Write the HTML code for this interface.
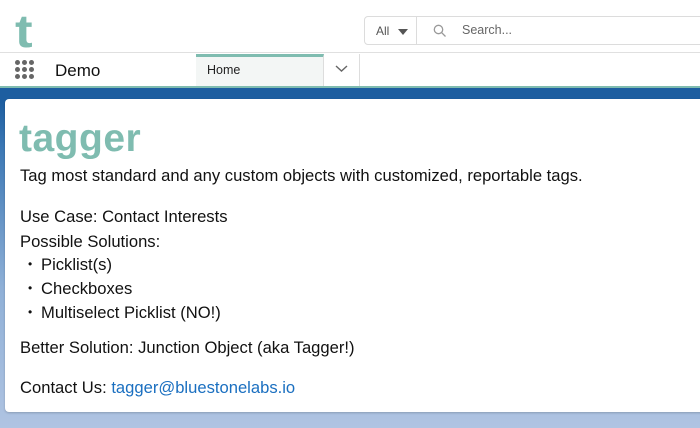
<!DOCTYPE html>
<html><head><style>
*{margin:0;padding:0;box-sizing:border-box}
body{width:700px;height:428px;overflow:hidden;font-family:"Liberation Sans",sans-serif;background:#fff;position:relative}
.hdr{position:absolute;left:0;top:0;width:700px;height:53px;background:#fff;border-bottom:1px solid #e0e0e0}
.logo{position:absolute;left:15px;top:4px;font-size:46px;font-weight:900;color:#7fbcb0;transform:scaleX(1.15);transform-origin:left}
.search{position:absolute;left:364px;top:16px;width:340px;height:29px;border:1px solid #dcdcdc;border-radius:4px;background:#fff}
.all{position:absolute;left:0;top:0;width:52px;height:27px;border-right:1px solid #dcdcdc;font-size:12px;color:#555;padding:7px 0 0 11px}
.all:after{content:"";position:absolute;left:33px;top:12px;border:5px solid transparent;border-top:6px solid #555}
.ph{position:absolute;left:97px;top:6px;font-size:12.5px;color:#666}
.nav{position:absolute;left:0;top:54px;width:700px;height:32px;background:#fff}
.dots{position:absolute;left:15px;top:60px}
.dots i{position:absolute;width:5px;height:5px;border-radius:50%;background:#666}
.demo{position:absolute;left:55px;top:61px;font-size:17px;color:#111}
.home{position:absolute;left:196px;top:54px;width:128px;height:32px;background:#f3f6f5;border-top:3px solid #7fbcb0;border-right:1px solid #ddd;font-size:12.5px;color:#222;padding:6px 0 0 11px}
.chev{position:absolute;left:324px;top:54px;width:36px;height:32px;border-right:1px solid #ddd}
.band{position:absolute;left:0;top:86px;width:700px;height:342px;background:linear-gradient(#1d5ea0 0px,#1d5ea0 14px,#3c78b5 60px,#8fb0d7 200px,#b0c4e2 342px);border-top:2px solid #7fbcb0}
.card{position:absolute;left:5px;top:99px;width:700px;height:313px;background:#fff;border-radius:4px;box-shadow:0 1px 2px rgba(0,0,0,.2)}
.t{position:absolute;left:20px;font-size:16.6px;color:#111;white-space:nowrap}
.title{position:absolute;left:19px;top:117px;font-size:39px;font-weight:bold;color:#7fbcb0;letter-spacing:.5px}
.b:before{content:"•";position:absolute;left:-13px;font-size:12px;top:2px}
a{color:#1a6fc0;text-decoration:none}
</style></head><body>
<div class="hdr"><div class="logo">t</div>
<div class="search"><div class="all">All</div>
<svg style="position:absolute;left:68px;top:7px" width="14" height="14" viewBox="0 0 14 14"><circle cx="5.5" cy="5.5" r="4.2" fill="none" stroke="#999" stroke-width="1.3"/><line x1="8.6" y1="8.6" x2="12.5" y2="12.5" stroke="#999" stroke-width="1.3"/></svg>
<div class="ph">Search...</div></div></div>
<div class="nav"></div>
<div class="dots"><i style="left:0;top:0"></i><i style="left:7px;top:0"></i><i style="left:14px;top:0"></i><i style="left:0;top:7px"></i><i style="left:7px;top:7px"></i><i style="left:14px;top:7px"></i><i style="left:0;top:14px"></i><i style="left:7px;top:14px"></i><i style="left:14px;top:14px"></i></div>
<div class="demo">Demo</div>
<div class="home">Home</div>
<div class="chev"><svg style="position:absolute;left:11px;top:10px" width="13" height="9" viewBox="0 0 13 9"><path d="M1 2 L6.5 7 L12 2" fill="none" stroke="#666" stroke-width="1.4"/></svg></div>
<div class="band"></div>
<div class="card"></div>
<div class="title">tagger</div>
<div class="t" style="top:166px">Tag most standard and any custom objects with customized, reportable tags.</div>
<div class="t" style="top:207px">Use Case: Contact Interests</div>
<div class="t" style="top:232px">Possible Solutions:</div>
<div class="t b" style="left:41px;top:255px">Picklist(s)</div>
<div class="t b" style="left:41px;top:279px">Checkboxes</div>
<div class="t b" style="left:41px;top:303px">Multiselect Picklist (NO!)</div>
<div class="t" style="top:338px">Better Solution: Junction Object (aka Tagger!)</div>
<div class="t" style="top:378px">Contact Us: <a>tagger@bluestonelabs.io</a></div>
</body></html>
